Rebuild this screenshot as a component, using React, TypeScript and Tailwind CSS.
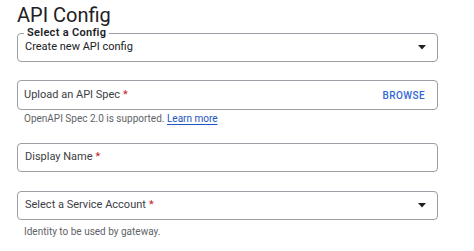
import React from 'react'

function Caret() {
  return (
    <svg width="8" height="5" viewBox="0 0 8 5" className="shrink-0">
      <path d="M0 0h8L4 4.5z" fill="#202124" />
    </svg>
  )
}

function Req() {
  return <span className="text-[#c5221f] ml-[3px]">*</span>
}

export default function App() {
  return (
    <div className="w-[474px] h-[251px] bg-white pl-[17px] font-['Roboto',sans-serif] text-[#202124]">
      {/* title */}
      <h1 className="pt-[2px] text-[20px] leading-[26px] font-normal">API Config</h1>

      {/* select config */}
      <div className="relative mt-[5px] w-[421px] h-[29px] border border-[#9aa0a6] rounded-[4px] flex items-center justify-between pl-[7px] pr-[11px]">
        <span className="absolute left-[6px] top-[-7px] px-[3px] bg-white text-[11px] leading-[11px] font-semibold tracking-[0.3px] text-[#202124]">
          Select a Config
        </span>
        <span className="text-[11px]">Create new API config</span>
        <Caret />
      </div>

      {/* api spec */}
      <div className="mt-[18px] w-[421px] h-[30px] border border-[#9aa0a6] rounded-[4px] flex items-center justify-between pl-[6px] pr-[12px]">
        <span className="text-[11px] text-[#3c4043]">
          Upload an API Spec
          <Req />
        </span>
        <span className="text-[10px] font-medium tracking-[0.4px] text-[#3367d6]">BROWSE</span>
      </div>
      <p className="pt-[2px] text-[10px] leading-[13px] text-[#5f6368] pl-[7px]">
        OpenAPI Spec 2.0 is supported.{' '}
        <a className="text-[#1a55c0] underline underline-offset-2">Learn more</a>
      </p>

      {/* display name */}
      <div className="mt-[18px] w-[421px] h-[29px] border border-[#9aa0a6] rounded-[4px] flex items-center pl-[7px]">
        <span className="text-[11px] text-[#3c4043]">
          Display Name
          <Req />
        </span>
      </div>

      {/* service account */}
      <div className="mt-[19px] w-[421px] h-[29px] border border-[#9aa0a6] rounded-[4px] flex items-center justify-between pl-[7px] pr-[11px]">
        <span className="text-[11px] text-[#3c4043]">
          Select a Service Account
          <Req />
        </span>
        <Caret />
      </div>
      <p className="mt-[5px] text-[10px] leading-[13px] text-[#5f6368] pl-[7px]">Identity to be used by gateway.</p>
    </div>
  )
}
